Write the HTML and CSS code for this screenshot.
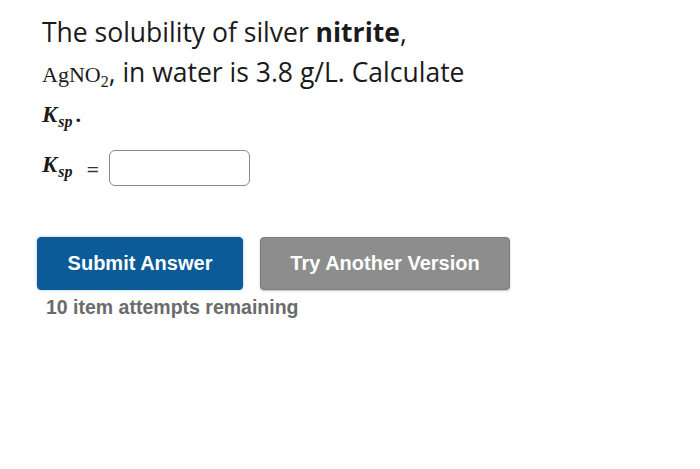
FILE: index.html
```html
<!DOCTYPE html>
<html>
<head>
<meta charset="utf-8">
<link rel="stylesheet" href="styles.css">
</head>
<body>
<div class="page">
  <p class="question">The solubility of silver <b>nitrite</b>,<br><span class="math">AgNO<sub>2</sub></span>, in water is 3.8 g/L. Calculate<br><span class="math"><i class="mk">K</i><sub class="msub"><i>sp</i></sub></span><span class="math dot">.</span></p>
  <div class="answer">
    <span class="math"><i class="mk">K</i><sub class="msub"><i>sp</i></sub></span>
    <span class="eq">=</span>
    <span class="box"></span>
  </div>
  <div class="buttons">
    <button class="btn submit">Submit Answer</button>
    <button class="btn other">Try Another Version</button>
  </div>
  <div class="remaining">10 item attempts remaining</div>
</div>
</body>
</html>
```
FILE: styles.css
```css
html, body {
  margin: 0;
  padding: 0;
  background: #ffffff;
}
.page {
  padding: 12px 0 0 42px;
  font-family: "Open Sans", sans-serif;
  color: #1a1a1a;
}
.question {
  margin: 0;
  font-size: 26.5px;
  line-height: 40px;
}
.question b {
  font-weight: 700;
}
.math {
  font-family: "Liberation Serif", "DejaVu Serif", serif;
  font-size: 22px;
  line-height: 0;
}
.math sub {
  font-size: 16px;
  vertical-align: -5px;
  line-height: 0;
}
.mk {
  font-style: italic;
  font-weight: 700;
  font-size: 23px;
}
.msub {
  font-weight: 700;
  margin-left: 1px;
}
.dot {
  font-weight: 700;
  margin-left: 3px;
}
.answer {
  display: flex;
  align-items: center;
  margin-top: 18px;
  height: 36px;
}
.eq {
  font-family: "Open Sans", sans-serif;
  font-size: 22px;
  margin: 0 10px 0 14px;
  color: #333;
}
.box {
  display: block;
  box-sizing: border-box;
  width: 141px;
  height: 36px;
  border: 1.5px solid #8a8a8a;
  border-radius: 6px;
}
.buttons {
  display: flex;
  gap: 17px;
  margin: 51px 0 0 -5px;
}
.btn {
  height: 53px;
  border-radius: 4px;
  color: #ffffff;
  font-family: "Liberation Sans", Arial, sans-serif;
  font-weight: 700;
  font-size: 20px;
  padding: 0;
}
.submit {
  width: 206px;
  background: #0a5b97;
  border: 1px solid #0a5b97;
  box-shadow: 0 0 3px rgba(60, 130, 200, 0.5);
}
.other {
  width: 250px;
  background: #8d8d8d;
  border: 1px solid #7c7c7c;
  box-shadow: 0 1px 2px rgba(0, 0, 0, 0.25);
}
.remaining {
  margin: 6px 0 0 4px;
  font-family: "Liberation Sans", Arial, sans-serif;
  font-weight: 700;
  font-size: 19.5px;
  color: #6b6b6b;
}
```
